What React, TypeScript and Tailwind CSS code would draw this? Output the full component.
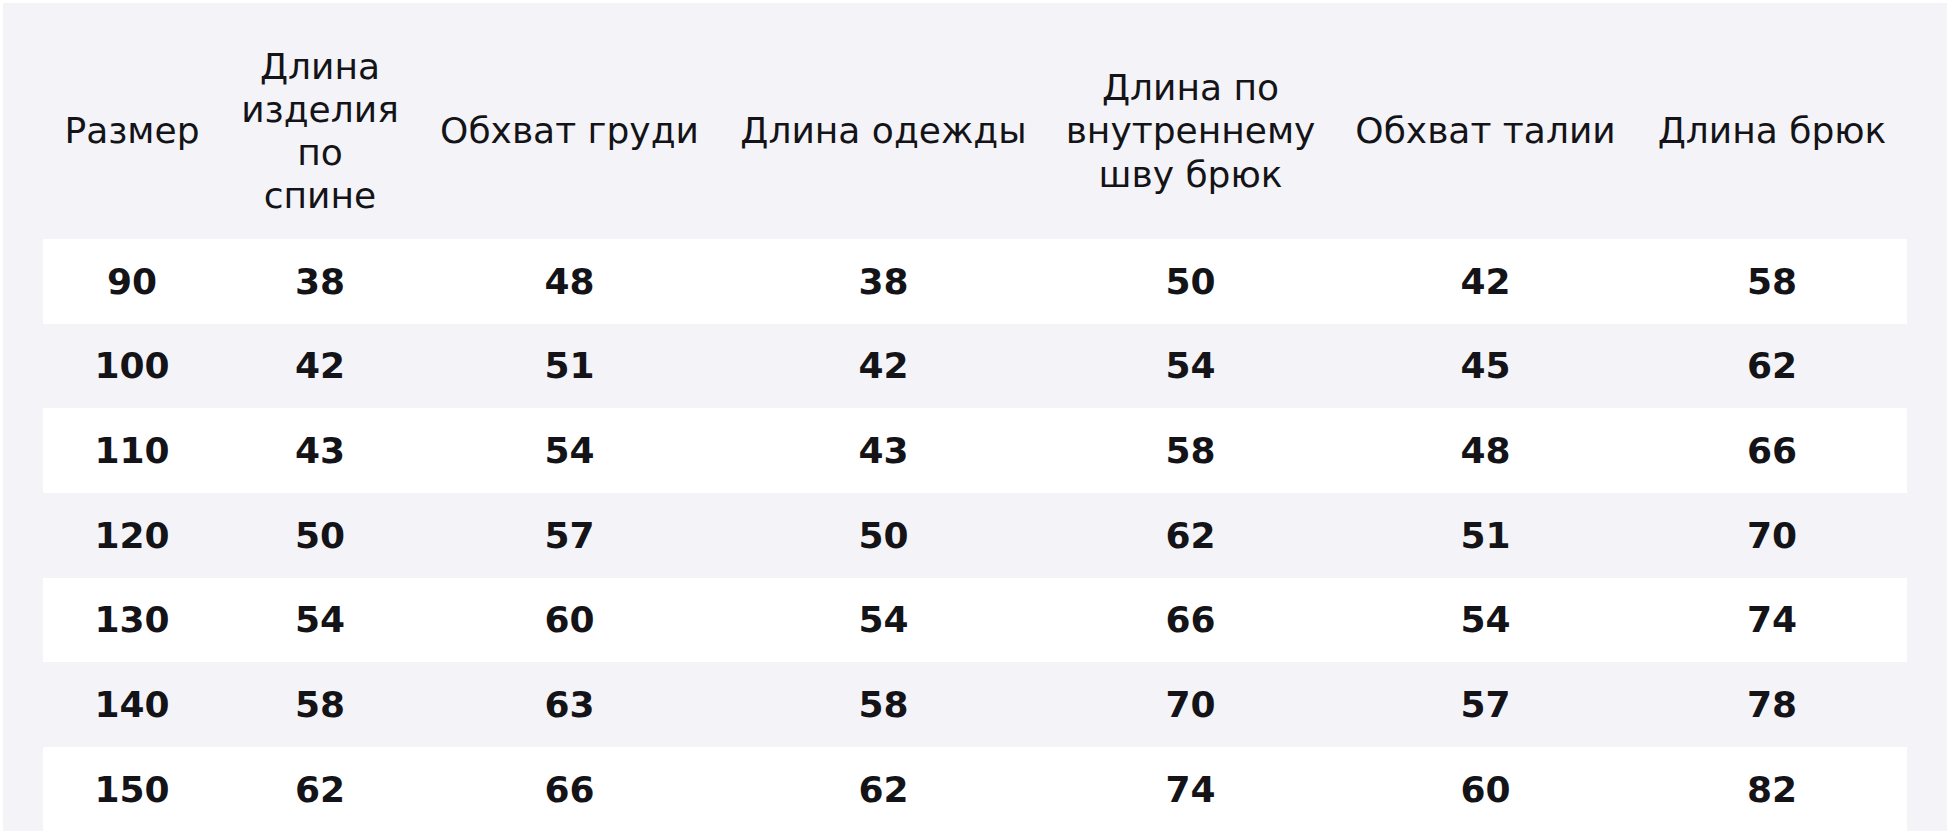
import React from "react";

const headers: string[][] = [
  ["Размер"],
  ["Длина", "изделия", "по", "спине"],
  ["Обхват груди"],
  ["Длина одежды"],
  ["Длина по", "внутреннему", "шву брюк"],
  ["Обхват талии"],
  ["Длина брюк"],
];

const rows: string[][] = [
  ["90", "38", "48", "38", "50", "42", "58"],
  ["100", "42", "51", "42", "54", "45", "62"],
  ["110", "43", "54", "43", "58", "48", "66"],
  ["120", "50", "57", "50", "62", "51", "70"],
  ["130", "54", "60", "54", "66", "54", "74"],
  ["140", "58", "63", "58", "70", "57", "78"],
  ["150", "62", "66", "62", "74", "60", "82"],
];

const cols = "grid grid-cols-[178px_198px_301px_327px_287px_303px_270px]";

export default function App() {
  return (
    <div
      className="h-[834px] w-[1950px] overflow-hidden bg-white p-[3px] text-[#141418]"
      style={{ fontFamily: '"DejaVu Sans", "Noto Sans", sans-serif' }}
    >
      <div className="h-full bg-[#f4f4f8] px-[40px] pt-[20px]">
        <div className={`${cols} h-[216px]`}>
          {headers.map((lines, i) => (
            <div
              key={i}
              className="flex flex-col items-center justify-center text-center text-[36px] leading-[43.2px] font-normal"
            >
              {lines.map((l, j) => (
                <span key={j} className="block whitespace-nowrap">
                  {l}
                </span>
              ))}
            </div>
          ))}
        </div>
        {rows.map((r, ri) => (
          <div
            key={ri}
            className={`${cols} h-[84.7px] ${ri % 2 === 0 ? "bg-white" : "bg-transparent"}`}
          >
            {r.map((v, ci) => (
              <div
                key={ci}
                className="flex items-center justify-center text-[36px] font-bold leading-[43.2px]"
              >
                {v}
              </div>
            ))}
          </div>
        ))}
      </div>
    </div>
  );
}
